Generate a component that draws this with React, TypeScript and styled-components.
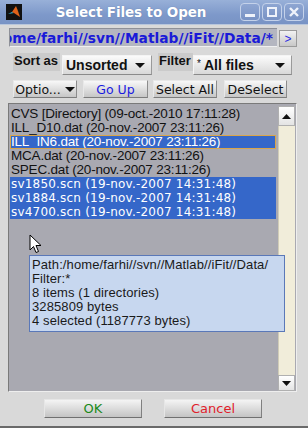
import React from "react";
import styled, { createGlobalStyle } from "styled-components";

const GlobalStyle = createGlobalStyle`
  html, body {
    margin: 0;
    padding: 0;
    background: #d8d8d8;
  }
  * {
    box-sizing: border-box;
  }
`;

const Window = styled.div`
  position: relative;
  width: 308px;
  height: 428px;
  background: #d9d9d9;
  border-bottom: 2px solid #6a6a6a;
  font-family: "Liberation Sans", Arial, sans-serif;
  overflow: hidden;
`;

const TitleBar = styled.div`
  display: flex;
  align-items: center;
  height: 25px;
  padding: 0 4px 0 6px;
  background: linear-gradient(#98b0d8, #7e99ca 60%, #7893c5);
  border-bottom: 1px solid #b8c6dc;
`;

const Title = styled.div`
  flex: 1;
  text-align: center;
  color: #ffffff;
  font-family: "DejaVu Sans", sans-serif;
  font-weight: bold;
  font-size: 13.5px;
  letter-spacing: -0.1px;
  text-shadow: 0 0 1px #5a76a8;
`;

const WinButtons = styled.div`
  display: flex;
  gap: 2px;
`;

const WinButton = styled.div`
  width: 20px;
  height: 18px;
  border: 1px solid #c4d2ea;
  border-radius: 4px;
  background: linear-gradient(#8ea6d2, #7892c4);
  display: flex;
  align-items: center;
  justify-content: center;
`;

const Body = styled.div`
  display: flex;
  flex-direction: column;
  padding: 3px 11px 0 8px;
`;

const PathRow = styled.div`
  display: flex;
  align-items: flex-end;
  gap: 2px;
  padding-left: 1px;
`;

const PathField = styled.div`
  width: 268px;
  height: 19px;
  display: flex;
  justify-content: flex-end;
  align-items: center;
  overflow: hidden;
  background: #b4b6c0;
  border-top: 1px solid #8e9098;
  border-left: 1px solid #8e9098;
  border-bottom: 1px solid #f0f0f0;
  padding-right: 4px;
`;

const PathText = styled.span`
  white-space: nowrap;
  flex-shrink: 0;
  color: #1a1ad8;
  font-family: "DejaVu Sans", sans-serif;
  font-weight: bold;
  font-size: 13.8px;
`;

const SmallButton = styled.div`
  width: 18px;
  height: 17px;
  display: flex;
  align-items: center;
  justify-content: center;
  background: linear-gradient(#f2f2f2, #c8c8c8);
  border: 1px solid #9a9a9a;
  color: #2a2ae0;
  font-size: 12px;
`;

const ControlRow = styled.div<{ $top: number }>`
  display: flex;
  align-items: flex-start;
  margin-top: ${({ $top }) => $top}px;
`;

const Label = styled.div<{ $ml: number; $w: number }>`
  margin-left: ${({ $ml }) => $ml}px;
  width: ${({ $w }) => $w}px;
  height: 18px;
  padding: 0 0 0 1px;
  background: #cbcbcb;
  font-family: "Liberation Sans", Arial, sans-serif;
  font-weight: bold;
  font-size: 13px;
  line-height: 15px;
  color: #111;
  white-space: nowrap;
`;

const Popup = styled.div<{ $w: number; $ml: number }>`
  margin-left: ${({ $ml }) => $ml}px;
  margin-top: 2px;
  width: ${({ $w }) => $w}px;
  height: 20px;
  display: flex;
  align-items: center;
  justify-content: space-between;
  padding: 0 6px 0 3px;
  background: linear-gradient(#fbfbfb, #d8d8d8);
  border: 1px solid #f4f4f4;
  border-right-color: #9a9a9a;
  border-bottom-color: #8a8a8a;
  font-family: "Liberation Sans", Arial, sans-serif;
  font-weight: bold;
  font-size: 14px;
  color: #111;
  white-space: nowrap;
`;

const Star = styled.span`
  font-weight: normal;
  font-size: 10px;
  margin-right: 3px;
  vertical-align: 3px;
`;

const Triangle = styled.span`
  width: 0;
  height: 0;
  border-left: 5px solid transparent;
  border-right: 5px solid transparent;
  border-top: 5px solid #111;
`;

const PushButton = styled.div<{ $w: number; $ml: number; $color?: string }>`
  margin-left: ${({ $ml }) => $ml}px;
  width: ${({ $w }) => $w}px;
  height: 18px;
  display: flex;
  align-items: center;
  justify-content: center;
  gap: 4px;
  background: linear-gradient(#f8f8f8, #c6c6c6);
  border: 1px solid #e8e8e8;
  border-right-color: #8c8c8c;
  border-bottom-color: #7c7c7c;
  font-family: "DejaVu Sans", sans-serif;
  font-size: 12.5px;
  color: ${({ $color }) => $color || "#111"};
  white-space: nowrap;
`;

const ListBox = styled.div`
  position: relative;
  margin-top: 5px;
  width: 289px;
  height: 289px;
  display: flex;
  border: 1px solid #7a7a7a;
  border-right-color: #eeeeee;
  border-bottom-color: #eeeeee;
  background: #a9a9b1;
`;

const Items = styled.div`
  flex: 1;
  padding: 3px 2px 0 1px;
`;

const Item = styled.div<{ $selected?: boolean; $focus?: boolean }>`
  height: 14px;
  line-height: 14px;
  padding-left: 1px;
  white-space: nowrap;
  overflow: hidden;
  background: ${({ $selected }) => ($selected ? "#3567c9" : "transparent")};
  color: ${({ $selected }) => ($selected ? "#ffffff" : "#111111")};
  outline: ${({ $focus }) => ($focus ? "1px solid #d9a54a" : "none")};
  outline-offset: -1px;
  font-family: ${({ $selected, $focus }) =>
    $selected && !$focus
      ? '"DejaVu Sans", sans-serif'
      : '"Liberation Sans", Arial, sans-serif'};
  font-size: ${({ $selected, $focus }) =>
    $selected && !$focus ? "12px" : "13.5px"};
  letter-spacing: ${({ $selected, $focus }) =>
    $selected && !$focus ? "0.2px" : "-0.2px"};
`;

const ScrollBar = styled.div`
  width: 17px;
  display: flex;
  flex-direction: column;
  margin: 2px 1px 0 0;
  background: #f1edda;
`;

const ArrowBox = styled.div<{ $h: number }>`
  height: ${({ $h }) => $h}px;
  display: flex;
  align-items: center;
  justify-content: center;
  background: linear-gradient(#ffffff, #e4e4e4);
  border: 1px solid #b0b0b0;
`;

const Track = styled.div`
  flex: 1;
  border-left: 1px solid #d0ccb8;
`;

const Tooltip = styled.div`
  position: absolute;
  left: 20px;
  top: 151px;
  width: 256px;
  height: 77px;
  padding: 2px 0 0 2px;
  background: #c7d7ef;
  border: 1px solid #5a78b8;
  color: #1a1a1a;
  font-family: "Liberation Sans", Arial, sans-serif;
  font-size: 13px;
  letter-spacing: 0.1px;
  line-height: 14px;
  white-space: nowrap;
  overflow: hidden;
`;

const Cursor = styled.svg`
  position: absolute;
  left: 20px;
  top: 130px;
`;

const ButtonRow = styled.div`
  display: flex;
  margin-top: 7px;
`;

const DialogButton = styled.div<{ $ml: number; $color: string }>`
  margin-left: ${({ $ml }) => $ml}px;
  width: 98px;
  height: 19px;
  display: flex;
  align-items: center;
  justify-content: center;
  background: linear-gradient(#f4f4f4, #c4c4c4);
  border: 1px solid #e6e6e6;
  border-right-color: #808080;
  border-bottom-color: #707070;
  color: ${({ $color }) => $color};
  font-family: "DejaVu Sans", sans-serif;
  font-size: 13px;
`;

const MatlabIcon = () => (
  <svg width="16" height="16" viewBox="0 0 16 16">
    <rect width="16" height="16" fill="#111" />
    <path d="M2 10 L6 8 L8 9 Z" fill="#2fb6d8" />
    <path d="M6 8 L10 2 L14 13 L11 11 L8 9 Z" fill="#e0621a" />
    <path d="M10 2 L12 7 L14 13 Z" fill="#f5a623" />
  </svg>
);

const files = [
  { name: "CVS [Directory] (09-oct.-2010 17:11:28)" },
  { name: "ILL_D10.dat (20-nov.-2007 23:11:26)" },
  { name: "ILL_IN6.dat (20-nov.-2007 23:11:26)", selected: true, focus: true },
  { name: "MCA.dat (20-nov.-2007 23:11:26)" },
  { name: "SPEC.dat (20-nov.-2007 23:11:26)" },
  { name: "sv1850.scn (19-nov.-2007 14:31:48)", selected: true },
  { name: "sv1884.scn (19-nov.-2007 14:31:48)", selected: true },
  { name: "sv4700.scn (19-nov.-2007 14:31:48)", selected: true },
];

const App: React.FC = () => (
  <>
    <GlobalStyle />
    <Window>
      <TitleBar>
        <MatlabIcon />
        <Title>Select Files to Open</Title>
        <WinButtons>
          <WinButton>
            <svg width="12" height="12" viewBox="0 0 12 12">
              <rect x="1" y="8" width="10" height="3" fill="#eef2fa" />
            </svg>
          </WinButton>
          <WinButton>
            <svg width="12" height="12" viewBox="0 0 12 12">
              <rect x="2" y="2" width="8" height="8" fill="none" stroke="#eef2fa" strokeWidth="2" />
            </svg>
          </WinButton>
          <WinButton>
            <svg width="12" height="12" viewBox="0 0 12 12">
              <path d="M2 2 L10 10 M10 2 L2 10" stroke="#eef2fa" strokeWidth="2.4" />
            </svg>
          </WinButton>
        </WinButtons>
      </TitleBar>

      <Body>
        <PathRow>
          <PathField>
            <PathText>/home/farhi//svn//Matlab//iFit//Data/*</PathText>
          </PathField>
          <SmallButton>&gt;</SmallButton>
        </PathRow>

        <ControlRow $top={6}>
          <Label $ml={5} $w={47}>Sort as</Label>
          <Popup $ml={2} $w={90}>
            Unsorted <Triangle />
          </Popup>
          <Label $ml={6} $w={35}>Filter</Label>
          <Popup $ml={0} $w={99}>
            <span>
              <Star>*</Star>All files
            </span>
            <Triangle />
          </Popup>
        </ControlRow>

        <ControlRow $top={5}>
          <PushButton $ml={5} $w={64}>
            Optio... <Triangle />
          </PushButton>
          <PushButton $ml={6} $w={65} $color="#1a1ae0">
            Go Up
          </PushButton>
          <PushButton $ml={5} $w={64}>
            Select All
          </PushButton>
          <PushButton $ml={7} $w={63}>
            DeSelect
          </PushButton>
        </ControlRow>

        <ListBox>
          <Items>
            {files.map((f) => (
              <Item key={f.name} $selected={f.selected} $focus={f.focus}>
                {f.name}
              </Item>
            ))}
          </Items>
          <ScrollBar>
            <ArrowBox $h={20}>
              <svg width="9" height="5" viewBox="0 0 9 5">
                <path d="M0 5 L4.5 0 L9 5 Z" fill="#111" />
              </svg>
            </ArrowBox>
            <Track />
            <ArrowBox $h={16}>
              <svg width="9" height="5" viewBox="0 0 9 5">
                <path d="M0 0 L4.5 5 L9 0 Z" fill="#111" />
              </svg>
            </ArrowBox>
          </ScrollBar>

          <Cursor width="13" height="20" viewBox="0 0 13 20">
            <path
              d="M1 1 L1 16 L4.5 12.5 L7 18.5 L9.5 17.5 L7 11.5 L12 11.5 Z"
              fill="#ffffff"
              stroke="#000000"
              strokeWidth="1"
            />
          </Cursor>

          <Tooltip>
            Path:/home/farhi//svn//Matlab//iFit//Data/
            <br />
            Filter:*
            <br />8 items (1 directories)
            <br />
            3285809 bytes
            <br />4 selected (1187773 bytes)
          </Tooltip>
        </ListBox>

        <ButtonRow>
          <DialogButton $ml={36} $color="#1a8a1a">
            OK
          </DialogButton>
          <DialogButton $ml={22} $color="#e0202a">
            Cancel
          </DialogButton>
        </ButtonRow>
      </Body>
    </Window>
  </>
);

export default App;
